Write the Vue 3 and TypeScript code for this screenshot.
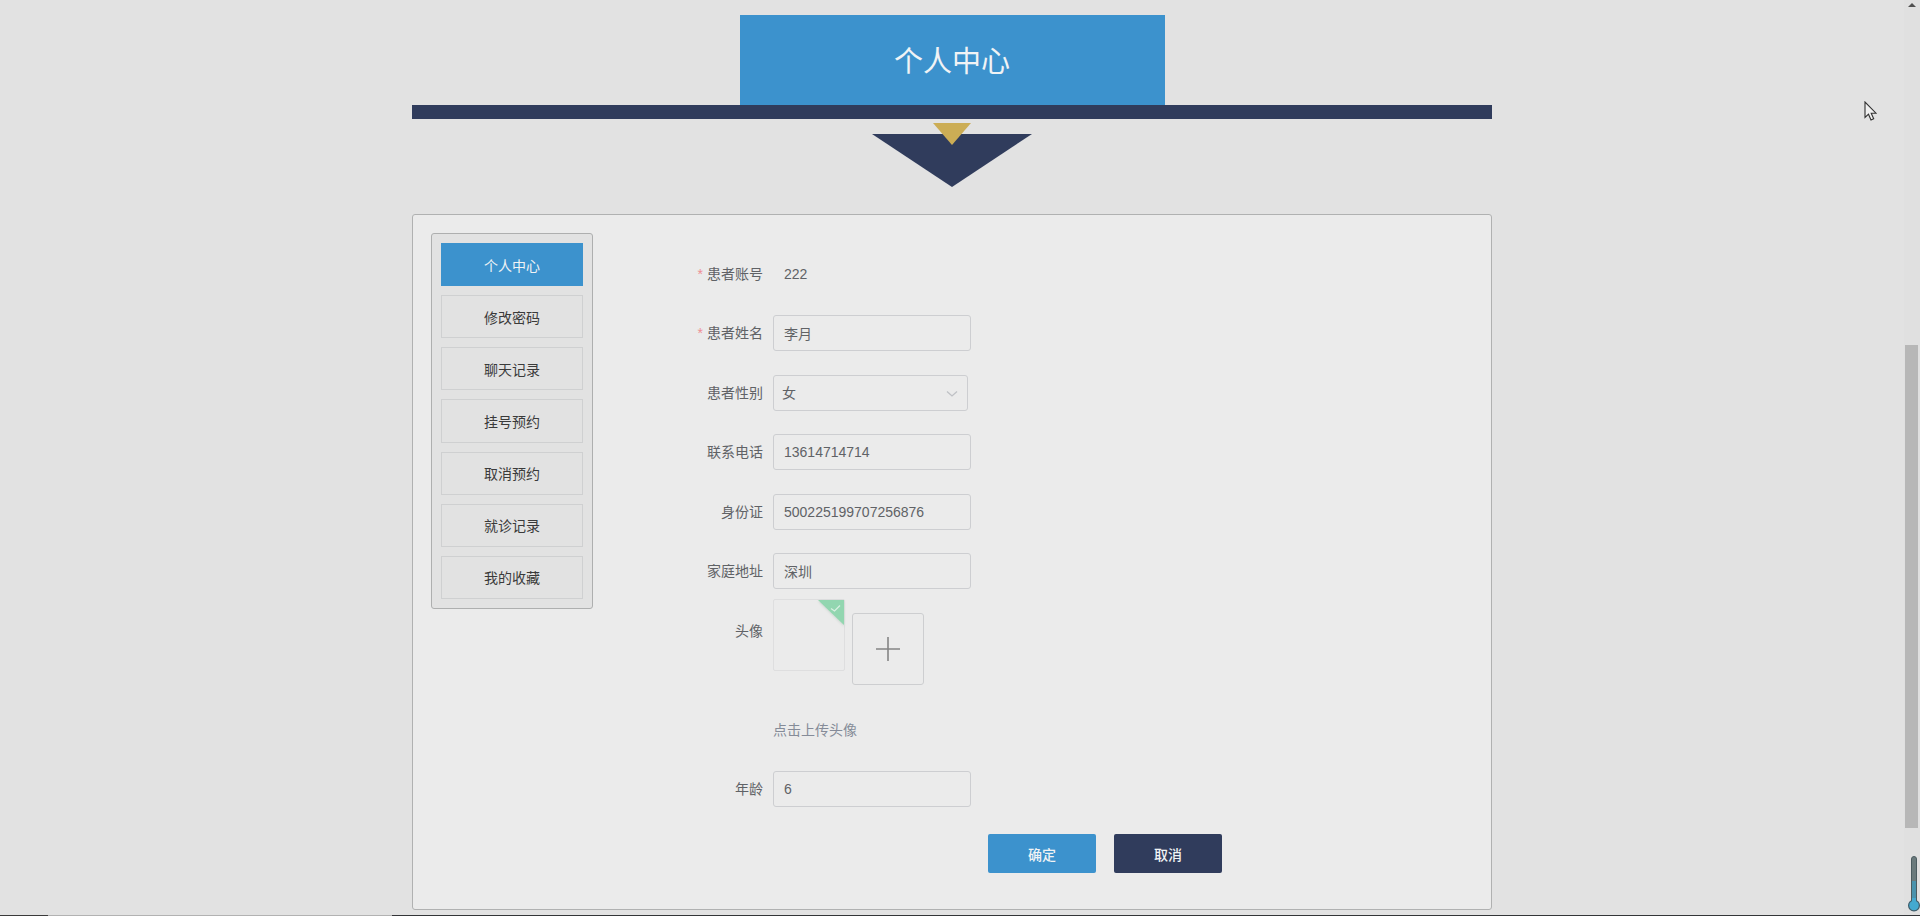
<script setup lang="ts">
import { ref } from 'vue'

interface TextField {
  id: string
  label: string
  value: string
  required?: boolean
  plain?: boolean
}

const menu: string[] = ['个人中心', '修改密码', '聊天记录', '挂号预约', '取消预约', '就诊记录', '我的收藏']
const active = ref('个人中心')

const identity = ref<TextField[]>([
  { id: 'account', label: '患者账号', value: '222', required: true, plain: true },
  { id: 'name', label: '患者姓名', value: '李月', required: true },
])
const contact = ref<TextField[]>([
  { id: 'phone', label: '联系电话', value: '13614714714' },
  { id: 'idcard', label: '身份证', value: '500225199707256876' },
  { id: 'address', label: '家庭地址', value: '深圳' },
])
const gender = ref('女')
const age = ref('6')
</script>

<template>
  <div class="page">
    <div class="view">
      <main class="main">
        <header class="banner">
          <h1 class="title">个人中心</h1>
          <svg class="arrow" viewBox="0 0 160 64" aria-hidden="true">
            <path d="M0 11H160L80 64Z" fill="#303c5c" />
            <path d="M61 0H99L80 22Z" fill="#ccad55" />
          </svg>
        </header>

        <section class="panel">
          <nav class="menu">
            <button
              v-for="item in menu"
              :key="item"
              type="button"
              class="menu-item"
              :class="{ active: item === active }"
              @click="active = item"
            >{{ item }}</button>
          </nav>

          <form class="form" @submit.prevent>
            <div class="fields">
              <div v-for="f in identity" :key="f.id" class="row">
                <label class="label" :for="f.id"><span v-if="f.required" class="star">*</span>{{ f.label }}</label>
                <input :id="f.id" v-model="f.value" class="input" :class="{ plain: f.plain }" type="text" :readonly="f.plain" />
              </div>

              <div class="row">
                <label class="label" for="gender">患者性别</label>
                <div class="select-box">
                  <select id="gender" v-model="gender" class="select">
                    <option>女</option>
                    <option>男</option>
                  </select>
                  <svg class="chevron" viewBox="0 0 12 8" aria-hidden="true">
                    <path d="M1 1.500L6 6L11 1.500" fill="none" stroke="#bfc1c5" stroke-width="1.300" />
                  </svg>
                </div>
              </div>

              <div v-for="f in contact" :key="f.id" class="row">
                <label class="label" :for="f.id">{{ f.label }}</label>
                <input :id="f.id" v-model="f.value" class="input" type="text" />
              </div>

              <div class="row">
                <span class="label">头像</span>
                <div class="avatar">
                  <div class="uploads">
                    <div class="thumb">
                      <svg class="badge" viewBox="0 0 26 26" aria-hidden="true">
                        <path d="M0 0H26V25Z" fill="#92d6b0" />
                        <path d="M13 8.500L16.500 11L22 5.500" fill="none" stroke="#d9efe2" stroke-width="1.300" />
                      </svg>
                    </div>
                    <button type="button" class="add" aria-label="点击上传头像">
                      <svg class="plus" viewBox="0 0 24 24" aria-hidden="true">
                        <path d="M12 0V24M0 12H24" stroke="#858585" stroke-width="1.600" />
                      </svg>
                    </button>
                  </div>
                  <p class="tip">点击上传头像</p>
                </div>
              </div>

              <div class="row">
                <label class="label" for="age">年龄</label>
                <input id="age" v-model="age" class="input" type="text" />
              </div>
            </div>

            <div class="actions">
              <button type="submit" class="btn confirm">确定</button>
              <button type="button" class="btn cancel">取消</button>
            </div>
          </form>
        </section>
      </main>

      <div class="scrollbar" aria-hidden="true">
        <svg class="up" viewBox="0 0 8 4"><path d="M0 4L4 0L8 4Z" fill="#505050" /></svg>
        <div class="scroll-thumb"></div>
      </div>
    </div>

    <div class="strip" aria-hidden="true"><i></i><i></i><i></i></div>

    <svg class="gauge" viewBox="0 0 12 56" aria-hidden="true">
      <rect x="3.500" y="0.500" width="5" height="48" rx="2.500" fill="#6b7b7d" stroke="#4c5c60" />
      <rect x="4" y="25" width="4" height="22" fill="#4a93ad" />
      <circle cx="6" cy="49.500" r="5.400" fill="#43a9d0" stroke="#3f5c69" stroke-width="1.200" />
      <rect x="4" y="42" width="4" height="6" fill="#43a9d0" />
    </svg>

    <svg class="pointer" viewBox="0 0 13 20" aria-hidden="true">
      <path d="M1 1V16.500L4.500 13.200L7 19L9.700 17.800L7.200 12.200H12Z" fill="#f0f0f0" stroke="#303030" stroke-width="1.100" />
    </svg>
  </div>
</template>

<style>
body {
  margin: 0;
  background: #e2e2e2;
}
</style>

<style scoped>
.page,
.page * {
  box-sizing: border-box;
}
.page {
  position: relative;
  display: flex;
  flex-direction: column;
  min-height: 100vh;
  overflow: hidden;
  color: #606266;
  font-family: "Liberation Sans", "Noto Sans CJK SC", sans-serif;
  font-size: 14px;
}
.page button,
.page input,
.page select {
  margin: 0;
  font: inherit;
  color: inherit;
}
.view {
  flex: 1;
  display: flex;
}
.main {
  flex: 1;
  padding: 15px 0 5px;
}
.banner,
.panel {
  width: 100%;
  max-width: 1080px;
  margin: 0 auto;
}
.banner {
  display: flex;
  flex-direction: column;
  align-items: center;
}
.title {
  width: 425px;
  margin: 0;
  padding-top: 4px;
  background: #3c92cd;
  color: #f0f3f5;
  font-size: 29px;
  font-weight: 400;
  line-height: 86px;
  text-align: center;
}
.banner::after {
  content: "";
  order: 1;
  align-self: stretch;
  height: 14px;
  background: #303c5c;
}
.arrow {
  order: 2;
  width: 160px;
  height: 64px;
  margin: 4px 0 27px;
}
.panel {
  display: flex;
  align-items: flex-start;
  padding: 18px 18px 36px;
  border: 1px solid #b0b1b1;
  border-radius: 3px;
  background: #ebebeb;
}
.menu {
  display: flex;
  flex-direction: column;
  gap: 9px;
  width: 162px;
  min-height: 376px;
  padding: 9px;
  border: 1px solid #aeafaf;
  border-radius: 3px;
  background: #e2e2e2;
}
.menu-item {
  flex: 1;
  padding: 0;
  border: 1px solid #cfd0d1;
  background: #e2e2e2;
  cursor: pointer;
}
.page .menu-item {
  color: #3a3a3a;
}
.page .menu-item.active {
  border-color: #3c92cd;
  background: #3c92cd;
  color: #f0f3f5;
}
.form {
  flex: 1;
  padding-top: 23px;
}
.fields {
  display: flex;
  flex-direction: column;
  justify-content: space-between;
  min-height: 551px;
}
.row {
  display: flex;
  gap: 10px;
}
.label {
  width: 170px;
  line-height: 36px;
  text-align: right;
}
.star {
  margin-right: 4px;
  color: #ee8f95;
}
.input,
.select {
  height: 36px;
  border: 1px solid #cdced1;
  border-radius: 3px;
  background: #ebebeb;
  outline: none;
}
.input {
  width: 198px;
  padding: 0 10px;
}
.plain {
  border-color: transparent;
  background: transparent;
}
.select-box {
  position: relative;
  width: 195px;
}
.select {
  display: block;
  width: 100%;
  padding: 0 8px;
  appearance: none;
}
.chevron {
  position: absolute;
  top: 15px;
  right: 10px;
  width: 12px;
  height: 8px;
  pointer-events: none;
}
.avatar {
  margin-top: -14px;
}
.uploads {
  display: flex;
  gap: 7px;
  height: 86px;
}
.thumb,
.add {
  width: 72px;
  height: 72px;
}
.thumb {
  display: flex;
  justify-content: flex-end;
  border: 1px solid #dededf;
  border-radius: 2px;
}
.badge {
  width: 26px;
  height: 26px;
  filter: drop-shadow(0 1px 1px #c8d4cd);
}
.add {
  display: grid;
  place-items: center;
  align-self: flex-end;
  padding: 0;
  border: 1px solid #cdced0;
  border-radius: 3px;
  background: #ebebeb;
}
.plus {
  width: 24px;
  height: 24px;
}
.tip {
  margin: 27px 0 0;
  color: #858b98;
  line-height: 36px;
}
.actions {
  display: flex;
  gap: 18px;
  margin: 27px 0 0 395px;
}
.btn {
  width: 108px;
  height: 39px;
  padding: 0;
  border: 0;
  border-radius: 2px;
}
.page .btn {
  color: #f0f3f5;
  font-weight: 500;
}
.confirm {
  background: #3c92cd;
}
.cancel {
  background: #303c5c;
}
.scrollbar {
  display: flex;
  flex-direction: column;
  align-items: center;
  width: 16px;
  padding: 3px 1px 0 0;
  background: #e0e0e0;
}
.up {
  flex: none;
  width: 8px;
  height: 4px;
}
.scroll-thumb {
  width: 13px;
  height: 53%;
  margin-top: 338px;
  background: #b7b7b7;
}
.strip {
  display: flex;
  height: 1px;
}
.strip i {
  width: 48px;
  background: #3a3a3a;
}
.strip i:nth-child(2) {
  width: 344px;
  background: #b2b2b2;
}
.strip i:nth-child(3) {
  flex: 1;
  background: #333538;
}
.gauge {
  position: absolute;
  right: 0;
  bottom: 4px;
  width: 12px;
  height: 56px;
}
.pointer {
  position: absolute;
  top: 101px;
  right: 43px;
  width: 13px;
  height: 20px;
  pointer-events: none;
}
</style>
